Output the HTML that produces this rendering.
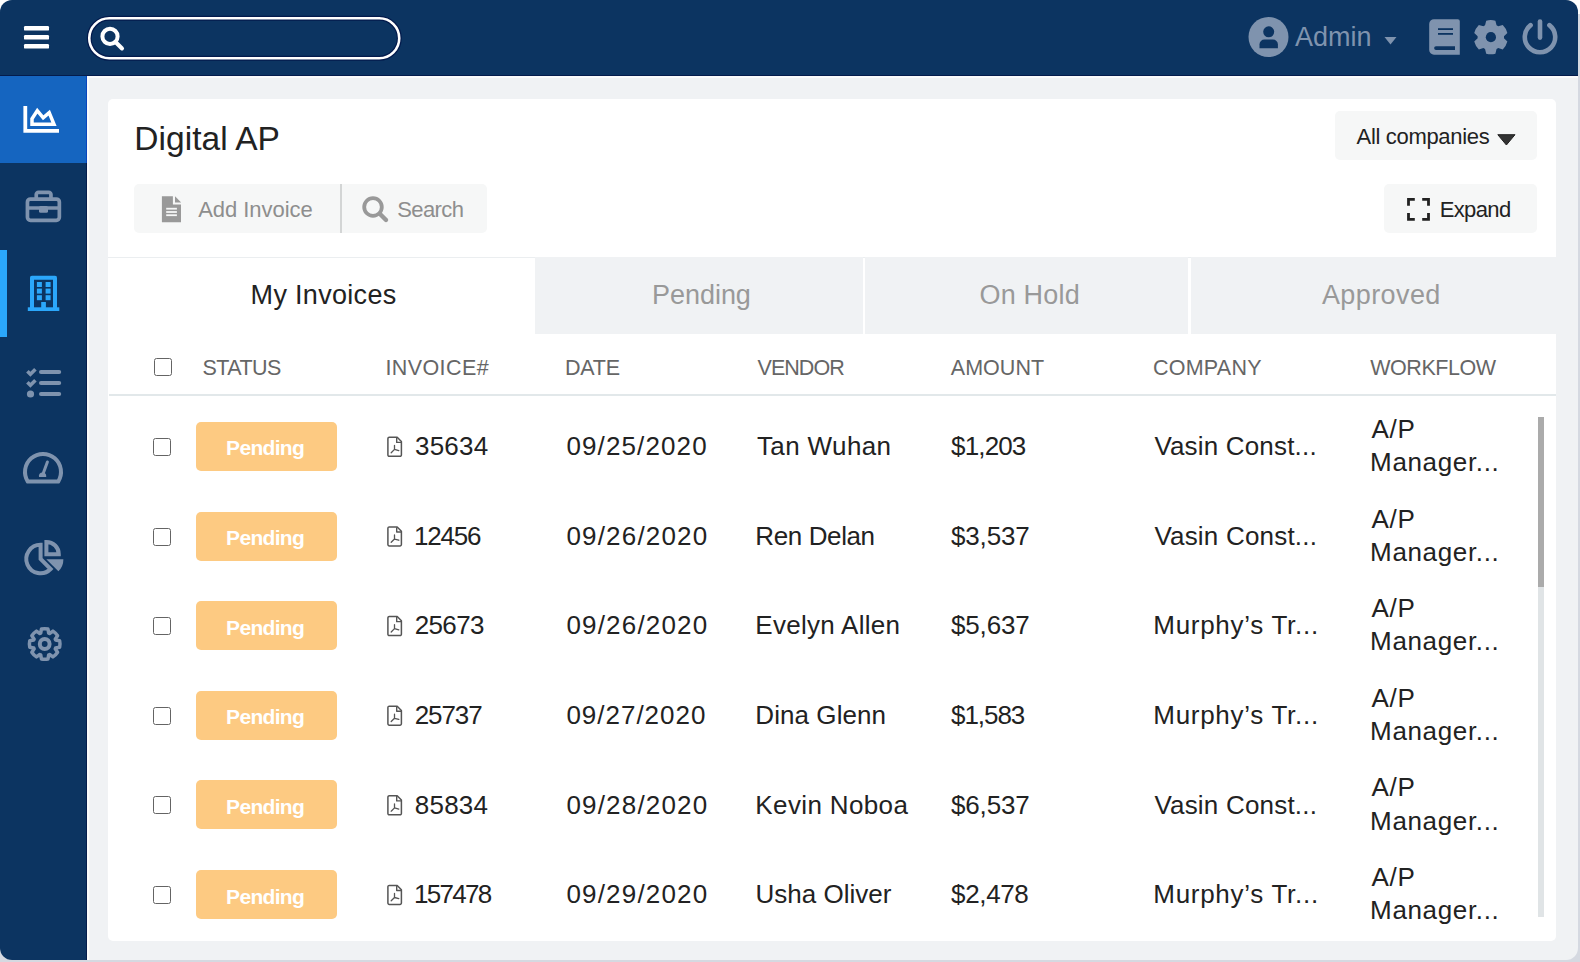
<!DOCTYPE html>
<html><head><meta charset="utf-8">
<style>
*{box-sizing:border-box;margin:0;padding:0}
html,body{width:1580px;height:962px;overflow:hidden;background:#fff;font-family:"Liberation Sans",sans-serif}
.abs{position:absolute}
#edgeR{left:1560px;top:14px;width:20px;height:948px;background:#D5D9E1}
#edgeB{left:0;top:940px;width:1580px;height:22px;background:#D5D9E1}
#win{left:0;top:0;width:1578px;height:959.5px;border-radius:12px;overflow:hidden;background:#F0F2F4}
#top{left:0;top:0;width:1578px;height:76px;background:#0C3461}
#side{left:0;top:76px;width:87px;height:884px;background:#0C3461;border-right:1.2px solid #041c4c}
#act{left:0;top:76px;width:87px;height:87px;background:#1565C0;border-right:1.6px solid #0845BE}
#ind{left:0;top:250px;width:7px;height:87px;background:#2BA7FB}
#card{left:108.2px;top:99px;width:1448.2px;height:841.7px;background:#fff;border-radius:5px}
.t{position:absolute;white-space:nowrap;line-height:1}
.btn{position:absolute;background:#F6F7F7;border-radius:5px}
.tab{position:absolute;top:257px;height:77px;background:#F0F2F4}
.tabt{position:absolute;top:283px;font-size:26.5px;color:#999;white-space:nowrap;line-height:1}
.hd{position:absolute;top:357px;font-size:21px;color:#666;white-space:nowrap;line-height:1;letter-spacing:0px}
.cb{position:absolute;width:18.2px;height:18px;border:1.9px solid #646464;border-radius:2.5px}
.badge{position:absolute;left:196px;width:141px;height:49px;background:#FDCA82;border-radius:5px;color:#fff;font-weight:bold;font-size:20px;text-align:center;line-height:49px}
.cell{position:absolute;font-size:26px;color:#222;white-space:nowrap;line-height:1}
</style></head><body>
<div class="abs" id="edgeR"></div>
<div class="abs" id="edgeB"></div>
<div class="abs" id="win">
  <div class="abs" id="top"></div>
  <div class="abs" id="side"></div>
  <div class="abs" id="act"></div>
  <div class="abs" id="ind"></div>
  <div class="abs" style="left:0;top:74.6px;width:1578px;height:1.2px;background:#041c4c"></div>
  <div class="abs" style="left:87px;top:76px;width:1.8px;height:884px;background:#FAFBFB"></div>
  <div class="abs" style="left:87px;top:76px;width:1491px;height:1.8px;background:#FAFBFB"></div>
  <div class="abs" id="card"></div>
  <!-- static -->
  <div class="btn" style="left:133.7px;top:183.7px;width:353.6px;height:49.5px"></div>
  <div class="abs" style="left:339.5px;top:183.7px;width:2px;height:49.5px;background:#D3D5D5"></div>
  <div class="btn" style="left:1335px;top:110.8px;width:202px;height:49.2px"></div>
  <div class="btn" style="left:1384px;top:184px;width:153px;height:49px"></div>
  <div class="abs" style="left:108.2px;top:257.2px;width:1448.2px;height:1.3px;background:#EBEEF0"></div>
  <div class="tab" style="left:535.2px;width:327.8px"></div>
  <div class="tab" style="left:865.2px;width:323.1px"></div>
  <div class="tab" style="left:1190.6px;width:365.4px"></div>
  <div class="cb" style="left:153.5px;top:357.8px"></div>
  <div class="abs" style="left:108.5px;top:394px;width:1447.5px;height:2px;background:#E2E8EA"></div>
  <div class="abs" style="left:1537.8px;top:417px;width:6.6px;height:500px;background:#E0E4E6"></div>
  <div class="abs" style="left:1537.8px;top:417px;width:6.6px;height:170.3px;background:#ABABAB"></div>
  <svg class="abs" style="left:0;top:0" width="1578" height="960" viewBox="0 0 1578 960">
    <defs>
      <g id="pdf" fill="none" stroke="#555" stroke-width="1.5" stroke-linejoin="round">
        <path d="M389.4 437.3 H397.2 L401.4 441.6 V454.9 a1.4 1.4 0 0 1 -1.4 1.4 H389.3 a1.4 1.4 0 0 1 -1.4 -1.4 V438.7 a1.4 1.4 0 0 1 1.5 -1.4 Z"/>
        <path d="M396.7 437.6 V442.4 H401.2" stroke-width="1.4"/>
        <path d="M394.5 445.3 V449.4 L391.2 452.7 M394.5 449.4 L398.8 450.6" stroke-width="1.3" stroke-linecap="round"/>
      </g>
    </defs>
    <g fill="#999">
      <path d="M161.9 196.2 H172.9 V204.4 H181 V222.2 H161.9 Z"/>
      <path d="M175 196.2 L181.2 202.5 H175 Z"/>
    </g>
    <g fill="#F6F7F7">
      <rect x="166.2" y="207.8" width="10.7" height="1.8"/>
      <rect x="166.2" y="211.1" width="10.7" height="1.8"/>
      <rect x="166.2" y="214.3" width="10.7" height="1.8"/>
    </g>
    <circle cx="373" cy="207" r="8.8" fill="none" stroke="#999" stroke-width="3.8"/>
    <line x1="380" y1="214" x2="386" y2="220" stroke="#999" stroke-width="4.4" stroke-linecap="round"/>
    <path d="M1497.8 134.7 H1515 L1506.4 145 Z" fill="#333" stroke="#222" stroke-width="1" stroke-linejoin="round"/>
    <g fill="none" stroke="#222" stroke-width="2.8">
      <path d="M1408.5 205.8 V199.3 H1414.8"/>
      <path d="M1422.2 199.3 H1428.5 V205.8"/>
      <path d="M1408.5 212.9 V219.4 H1414.8"/>
      <path d="M1422.2 219.4 H1428.5 V212.9"/>
    </g>
  </svg>
<!-- content -->
<div class="t" style="left:134.35px;top:122.14px;font-size:33.5px;color:#222;letter-spacing:0.039px;">Digital AP</div>
<div class="t" style="left:198.16px;top:198.87px;font-size:22px;color:#8e8e8e;letter-spacing:-0.046px;">Add Invoice</div>
<div class="t" style="left:397.20px;top:198.87px;font-size:22px;color:#8e8e8e;letter-spacing:-0.580px;">Search</div>
<div class="t" style="left:1356.56px;top:126.17px;font-size:22px;color:#222;letter-spacing:-0.321px;">All companies</div>
<div class="t" style="left:1439.70px;top:198.87px;font-size:22px;color:#222;letter-spacing:-0.619px;">Expand</div>
<div class="t" style="left:250.59px;top:282.14px;font-size:27px;color:#222;letter-spacing:0.311px;">My Invoices</div>
<div class="t" style="left:651.99px;top:281.94px;font-size:27px;color:#999;letter-spacing:-0.031px;">Pending</div>
<div class="t" style="left:979.52px;top:281.94px;font-size:27px;color:#999;letter-spacing:0.196px;">On Hold</div>
<div class="t" style="left:1321.95px;top:281.94px;font-size:27px;color:#999;letter-spacing:0.408px;">Approved</div>
<div class="t" style="left:202.52px;top:357.60px;font-size:21.5px;color:#666;letter-spacing:-0.565px;">STATUS</div>
<div class="t" style="left:385.42px;top:357.60px;font-size:21.5px;color:#666;letter-spacing:0.412px;">INVOICE#</div>
<div class="t" style="left:565.04px;top:357.60px;font-size:21.5px;color:#666;letter-spacing:-0.245px;">DATE</div>
<div class="t" style="left:757.61px;top:357.60px;font-size:21.5px;color:#666;letter-spacing:-0.981px;">VENDOR</div>
<div class="t" style="left:950.76px;top:357.60px;font-size:21.5px;color:#666;letter-spacing:0.048px;">AMOUNT</div>
<div class="t" style="left:1152.91px;top:357.60px;font-size:21.5px;color:#666;letter-spacing:0.249px;">COMPANY</div>
<div class="t" style="left:1370.31px;top:357.60px;font-size:21.5px;color:#666;letter-spacing:-0.472px;">WORKFLOW</div>
<div class="cb" style="left:153.3px;top:438.00px"></div>
<div class="badge" style="top:422.00px"></div>
<div class="t" style="left:226.10px;top:437.42px;font-size:21px;color:#fff;letter-spacing:-0.699px;font-weight:bold;">Pending</div>
<div class="t" style="left:415.01px;top:433.19px;font-size:26px;color:#222;letter-spacing:0.223px;">35634</div>
<div class="t" style="left:566.38px;top:433.19px;font-size:26px;color:#222;letter-spacing:1.124px;">09/25/2020</div>
<div class="t" style="left:756.92px;top:433.19px;font-size:26px;color:#222;letter-spacing:0.385px;">Tan Wuhan</div>
<div class="t" style="left:951.02px;top:433.19px;font-size:26px;color:#222;letter-spacing:-0.844px;">$1,203</div>
<div class="t" style="left:1154.39px;top:433.19px;font-size:26px;color:#222;letter-spacing:0.178px;">Vasin Const...</div>
<div class="t" style="left:1371.45px;top:415.89px;font-size:26px;color:#222;letter-spacing:0.725px;">A/P</div>
<div class="t" style="left:1370.07px;top:449.19px;font-size:26px;color:#222;letter-spacing:0.659px;">Manager...</div>
<div class="cb" style="left:153.3px;top:527.62px"></div>
<div class="badge" style="top:511.62px"></div>
<div class="t" style="left:226.10px;top:527.04px;font-size:21px;color:#fff;letter-spacing:-0.699px;font-weight:bold;">Pending</div>
<div class="t" style="left:414.02px;top:522.81px;font-size:26px;color:#222;letter-spacing:-1.230px;">12456</div>
<div class="t" style="left:566.38px;top:522.81px;font-size:26px;color:#222;letter-spacing:1.191px;">09/26/2020</div>
<div class="t" style="left:755.37px;top:522.81px;font-size:26px;color:#222;letter-spacing:-0.396px;">Ren Delan</div>
<div class="t" style="left:951.02px;top:522.81px;font-size:26px;color:#222;letter-spacing:-0.164px;">$3,537</div>
<div class="t" style="left:1154.39px;top:522.81px;font-size:26px;color:#222;letter-spacing:0.201px;">Vasin Const...</div>
<div class="t" style="left:1371.45px;top:505.51px;font-size:26px;color:#222;letter-spacing:0.725px;">A/P</div>
<div class="t" style="left:1370.07px;top:538.81px;font-size:26px;color:#222;letter-spacing:0.659px;">Manager...</div>
<div class="cb" style="left:153.3px;top:617.24px"></div>
<div class="badge" style="top:601.24px"></div>
<div class="t" style="left:226.10px;top:616.66px;font-size:21px;color:#fff;letter-spacing:-0.699px;font-weight:bold;">Pending</div>
<div class="t" style="left:414.69px;top:612.43px;font-size:26px;color:#222;letter-spacing:-0.623px;">25673</div>
<div class="t" style="left:566.38px;top:612.43px;font-size:26px;color:#222;letter-spacing:1.191px;">09/26/2020</div>
<div class="t" style="left:755.37px;top:612.43px;font-size:26px;color:#222;letter-spacing:0.276px;">Evelyn Allen</div>
<div class="t" style="left:951.02px;top:612.43px;font-size:26px;color:#222;letter-spacing:-0.164px;">$5,637</div>
<div class="t" style="left:1153.27px;top:612.43px;font-size:26px;color:#222;letter-spacing:0.718px;">Murphy’s Tr...</div>
<div class="t" style="left:1371.45px;top:595.13px;font-size:26px;color:#222;letter-spacing:0.725px;">A/P</div>
<div class="t" style="left:1370.07px;top:628.43px;font-size:26px;color:#222;letter-spacing:0.659px;">Manager...</div>
<div class="cb" style="left:153.3px;top:706.86px"></div>
<div class="badge" style="top:690.86px"></div>
<div class="t" style="left:226.10px;top:706.28px;font-size:21px;color:#fff;letter-spacing:-0.699px;font-weight:bold;">Pending</div>
<div class="t" style="left:414.69px;top:702.05px;font-size:26px;color:#222;letter-spacing:-1.073px;">25737</div>
<div class="t" style="left:566.38px;top:702.05px;font-size:26px;color:#222;letter-spacing:0.991px;">09/27/2020</div>
<div class="t" style="left:755.37px;top:702.05px;font-size:26px;color:#222;letter-spacing:0.059px;">Dina Glenn</div>
<div class="t" style="left:951.02px;top:702.05px;font-size:26px;color:#222;letter-spacing:-1.044px;">$1,583</div>
<div class="t" style="left:1153.27px;top:702.05px;font-size:26px;color:#222;letter-spacing:0.718px;">Murphy’s Tr...</div>
<div class="t" style="left:1371.45px;top:684.75px;font-size:26px;color:#222;letter-spacing:0.725px;">A/P</div>
<div class="t" style="left:1370.07px;top:718.05px;font-size:26px;color:#222;letter-spacing:0.659px;">Manager...</div>
<div class="cb" style="left:153.3px;top:796.48px"></div>
<div class="badge" style="top:780.48px"></div>
<div class="t" style="left:226.10px;top:795.90px;font-size:21px;color:#fff;letter-spacing:-0.699px;font-weight:bold;">Pending</div>
<div class="t" style="left:414.87px;top:791.67px;font-size:26px;color:#222;letter-spacing:0.207px;">85834</div>
<div class="t" style="left:566.38px;top:791.67px;font-size:26px;color:#222;letter-spacing:1.191px;">09/28/2020</div>
<div class="t" style="left:755.37px;top:791.67px;font-size:26px;color:#222;letter-spacing:0.363px;">Kevin Noboa</div>
<div class="t" style="left:951.02px;top:791.67px;font-size:26px;color:#222;letter-spacing:-0.164px;">$6,537</div>
<div class="t" style="left:1154.39px;top:791.67px;font-size:26px;color:#222;letter-spacing:0.201px;">Vasin Const...</div>
<div class="t" style="left:1371.45px;top:774.37px;font-size:26px;color:#222;letter-spacing:0.725px;">A/P</div>
<div class="t" style="left:1370.07px;top:807.67px;font-size:26px;color:#222;letter-spacing:0.659px;">Manager...</div>
<div class="cb" style="left:153.3px;top:886.10px"></div>
<div class="badge" style="top:870.10px"></div>
<div class="t" style="left:226.10px;top:885.52px;font-size:21px;color:#fff;letter-spacing:-0.699px;font-weight:bold;">Pending</div>
<div class="t" style="left:414.02px;top:881.29px;font-size:26px;color:#222;letter-spacing:-1.704px;">157478</div>
<div class="t" style="left:566.38px;top:881.29px;font-size:26px;color:#222;letter-spacing:1.191px;">09/29/2020</div>
<div class="t" style="left:755.49px;top:881.29px;font-size:26px;color:#222;letter-spacing:0.001px;">Usha Oliver</div>
<div class="t" style="left:951.02px;top:881.29px;font-size:26px;color:#222;letter-spacing:-0.344px;">$2,478</div>
<div class="t" style="left:1153.27px;top:881.29px;font-size:26px;color:#222;letter-spacing:0.718px;">Murphy’s Tr...</div>
<div class="t" style="left:1371.45px;top:863.99px;font-size:26px;color:#222;letter-spacing:0.725px;">A/P</div>
<div class="t" style="left:1370.07px;top:897.29px;font-size:26px;color:#222;letter-spacing:0.659px;">Manager...</div>
<svg class="abs" style="left:0;top:0;overflow:visible" width="1578" height="960"><use href="#pdf" x="0" y="0.00"/><use href="#pdf" x="0" y="89.62"/><use href="#pdf" x="0" y="179.24"/><use href="#pdf" x="0" y="268.86"/><use href="#pdf" x="0" y="358.48"/><use href="#pdf" x="0" y="448.10"/></svg>
<!-- /content -->
  <!-- sidebar icons -->
  <svg class="abs" style="left:0;top:76px" width="87" height="884" viewBox="0 76 87 884">
    <g fill="none" stroke="#fff" stroke-width="3.8">
      <path d="M25.3 106 V130.9 H59"/>
      <path d="M32 124.3 V118.8 L37.3 110.6 L43.2 117.8 L49.2 112.6 L54 124.3 Z" stroke-width="3.5" stroke-linejoin="miter"/>
    </g>
    <g fill="none" stroke="#7F93AE" stroke-width="3.7">
      <rect x="27.45" y="199.05" width="31.9" height="21.3" rx="3"/>
      <path d="M36.25 199 V194.6 a2.2 2.2 0 0 1 2.2 -2.2 h10.3 a2.2 2.2 0 0 1 2.2 2.2 V199"/>
      <path d="M27.5 208 H59.3"/>
    </g>
    <rect x="39" y="206" width="9" height="6.8" rx="1.5" fill="#7F93AE"/>
    <g fill="#2BA7FB">
      <path d="M30 308 V278 a2 2 0 0 1 2 -2.2 h23 a2 2 0 0 1 2 2.2 V308 h-4 V279.8 h-19 V308z"/>
      <rect x="27.8" y="307.3" width="31.5" height="3.7"/>
      <rect x="36.9" y="282" width="5" height="5"/><rect x="45.6" y="282" width="5" height="5"/>
      <rect x="36.9" y="288.6" width="5" height="5"/><rect x="45.6" y="288.6" width="5" height="5"/>
      <rect x="36.9" y="295.2" width="5" height="5"/><rect x="45.6" y="295.2" width="5" height="5"/>
      <rect x="41.2" y="302" width="4.7" height="6"/>
    </g>
    <g fill="none" stroke="#7F93AE" stroke-width="3.6">
      <polyline points="27.4,371.3 30.4,374.3 35.4,369.3"/>
      <polyline points="27.4,382.3 30.4,385.3 35.4,380.3"/>
    </g>
    <g fill="#7F93AE">
      <circle cx="30.5" cy="394" r="3.6"/>
      <rect x="39" y="370" width="22.2" height="4" rx="2"/>
      <rect x="39" y="381.1" width="22.2" height="4" rx="2"/>
      <rect x="39" y="392" width="22.2" height="4" rx="2"/>
    </g>
    <path d="M27.8 481.6 A18 18 0 1 1 58.2 481.6 Z" fill="none" stroke="#7F93AE" stroke-width="4" stroke-linejoin="round"/>
    <line x1="43" y1="474" x2="47.4" y2="462" stroke="#7F93AE" stroke-width="3" stroke-linecap="round"/>
    <path d="M39 477 a3.6 3.6 0 0 1 3.6 -4.6 a3.6 3.6 0 0 1 3.6 3.6 v1z" fill="#7F93AE"/>
    <g fill="none" stroke="#7F93AE" stroke-width="4" stroke-linejoin="miter">
      <path d="M40.6 544.8 V559 L50.6 569 A14.2 14.2 0 1 1 40.6 544.8 Z"/>
      <path d="M46.4 554.3 V541.9 A12.4 12.4 0 0 1 58.8 554.3 Z"/>
    </g>
    <path d="M46.3 559.2 H63.4 A17.1 17.1 0 0 1 58.4 571.3 Z" fill="#7F93AE"/>
    <path fill="none" stroke="#7F93AE" stroke-width="3.5" stroke-linejoin="round" d="M40.70 633.11L41.45 629.05A15.3 15.3 0 0 1 47.95 629.05L48.70 633.11A11.6 11.6 0 0 1 49.57 633.47L52.97 631.13A15.3 15.3 0 0 1 57.57 635.73L55.23 639.13A11.6 11.6 0 0 1 55.59 640.00L59.65 640.75A15.3 15.3 0 0 1 59.65 647.25L55.59 648.00A11.6 11.6 0 0 1 55.23 648.87L57.57 652.27A15.3 15.3 0 0 1 52.97 656.87L49.57 654.53A11.6 11.6 0 0 1 48.70 654.89L47.95 658.95A15.3 15.3 0 0 1 41.45 658.95L40.70 654.89A11.6 11.6 0 0 1 39.83 654.53L36.43 656.87A15.3 15.3 0 0 1 31.83 652.27L34.17 648.87A11.6 11.6 0 0 1 33.81 648.00L29.75 647.25A15.3 15.3 0 0 1 29.75 640.75L33.81 640.00A11.6 11.6 0 0 1 34.17 639.13L31.83 635.73A15.3 15.3 0 0 1 36.43 631.13L39.83 633.47A11.6 11.6 0 0 1 40.70 633.11Z"/>
    <circle cx="44.7" cy="644" r="4.9" fill="none" stroke="#7F93AE" stroke-width="4"/>
  </svg>
  <!-- header -->
  <svg class="abs" style="left:0;top:0" width="1578" height="76" viewBox="0 0 1578 76">
    <g fill="#fff">
      <rect x="24" y="26" width="25" height="4.6" rx="1.2"/>
      <rect x="24" y="35" width="25" height="4.6" rx="1.2"/>
      <rect x="24" y="44" width="25" height="4.6" rx="1.2"/>
    </g>
    <rect x="89.25" y="18.25" width="310" height="40" rx="20" fill="none" stroke="#031a4c" stroke-width="5"/>
    <rect x="89.25" y="18.25" width="310" height="40" rx="20" fill="none" stroke="#fff" stroke-width="2.6"/>
    <circle cx="110" cy="36.4" r="7.6" fill="none" stroke="#fff" stroke-width="4"/>
    <line x1="115.5" y1="42" x2="122" y2="48.5" stroke="#fff" stroke-width="4" stroke-linecap="round"/>
    <g fill="#7F93AE">
      <circle cx="1268.5" cy="37" r="20"/>
    </g>
    <g fill="#0C3461">
      <circle cx="1268.7" cy="31.8" r="5.5"/>
      <path d="M1259.5 48.2 v-3.6 a5 5 0 0 1 5-5 h8.4 a5 5 0 0 1 5 5 v3.6 z"/>
    </g>
    <path d="M1384.5 37 h12 l-6 7.5 z" fill="#7F93AE"/>
    <!-- book -->
    <path fill="#7F93AE" d="M1434 19.2 h23.8 a2 2 0 0 1 2 2 v33.5 h-25.8 a4.8 4.8 0 0 1 -4.8 -4.8 v-26 a4.8 4.8 0 0 1 4.8 -4.7 z"/>
    <rect x="1438" y="28.2" width="15" height="1.8" fill="#0C3461"/>
    <rect x="1438" y="33" width="15" height="1.8" fill="#0C3461"/>
    <path d="M1436 46.2 h19 v3.7 h-19 a1.85 1.85 0 0 1 0 -3.7z" fill="#0C3461"/>
    <!-- gear -->
    <path fill="#7F93AE" d="M1485.05 25.32L1486.20 20.73A17.1 17.1 0 0 1 1495.40 20.73L1496.55 25.32A13.2 13.2 0 0 1 1498.21 26.28L1502.76 24.98A17.1 17.1 0 0 1 1507.36 32.95L1503.96 36.24A13.2 13.2 0 0 1 1503.96 38.16L1507.36 41.45A17.1 17.1 0 0 1 1502.76 49.42L1498.21 48.12A13.2 13.2 0 0 1 1496.55 49.08L1495.40 53.67A17.1 17.1 0 0 1 1486.20 53.67L1485.05 49.08A13.2 13.2 0 0 1 1483.39 48.12L1478.84 49.42A17.1 17.1 0 0 1 1474.24 41.45L1477.64 38.16A13.2 13.2 0 0 1 1477.64 36.24L1474.24 32.95A17.1 17.1 0 0 1 1478.84 24.98L1483.39 26.28A13.2 13.2 0 0 1 1485.05 25.32Z"/>
    <circle cx="1490.9" cy="37.2" r="5.1" fill="#0C3461"/>
    <!-- power -->
    <path d="M1530.6 25.1 A15.2 15.2 0 1 0 1549.4 25.1" fill="none" stroke="#7F93AE" stroke-width="4.6" stroke-linecap="round"/>
    <line x1="1540" y1="21.6" x2="1540" y2="37.6" stroke="#7F93AE" stroke-width="4.6" stroke-linecap="round"/>
  </svg>
  <div class="t" style="left:1295px;top:24px;font-size:27px;color:#7F93AE">Admin</div>
</div>
</body></html>
